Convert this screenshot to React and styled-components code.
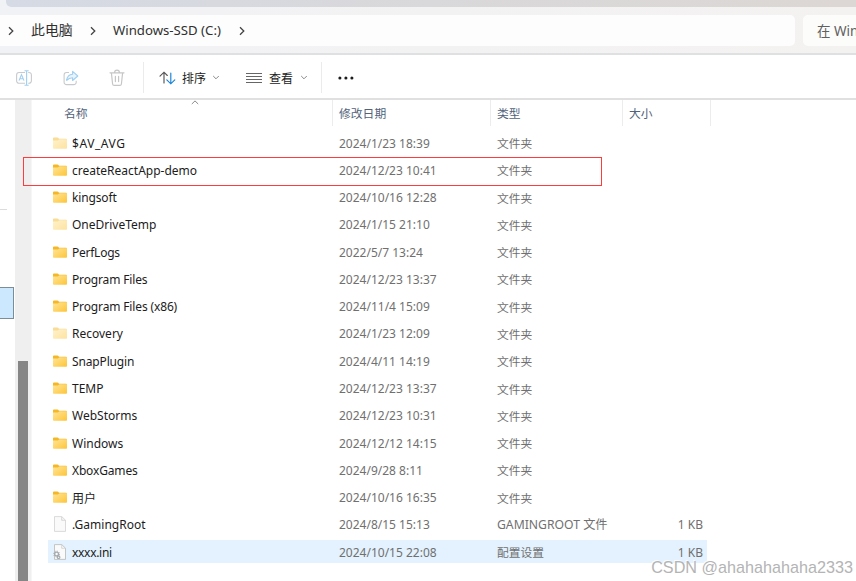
import React from "react";
import styled, { createGlobalStyle } from "styled-components";

const files = [
  { name: "$AV_AVG", date: "2024/1/23 18:39", type: "文件夹", icon: "folder", faded: true, spacing: 0.55 },
  { name: "createReactApp-demo", date: "2024/12/23 10:41", type: "文件夹", icon: "folder" },
  { name: "kingsoft", date: "2024/10/16 12:28", type: "文件夹", icon: "folder", spacing: -0.15 },
  { name: "OneDriveTemp", date: "2024/1/15 21:10", type: "文件夹", icon: "folder", faded: true },
  { name: "PerfLogs", date: "2022/5/7 13:24", type: "文件夹", icon: "folder", spacing: -0.25 },
  { name: "Program Files", date: "2024/12/23 13:37", type: "文件夹", icon: "folder", spacing: -0.15 },
  { name: "Program Files (x86)", date: "2024/11/4 15:09", type: "文件夹", icon: "folder", spacing: -0.14 },
  { name: "Recovery", date: "2024/1/23 12:09", type: "文件夹", icon: "folder", faded: true },
  { name: "SnapPlugin", date: "2024/4/11 14:19", type: "文件夹", icon: "folder", spacing: -0.15 },
  { name: "TEMP", date: "2024/12/23 13:37", type: "文件夹", icon: "folder" },
  { name: "WebStorms", date: "2024/12/23 10:31", type: "文件夹", icon: "folder" },
  { name: "Windows", date: "2024/12/12 14:15", type: "文件夹", icon: "folder" },
  { name: "XboxGames", date: "2024/9/28 8:11", type: "文件夹", icon: "folder", spacing: -0.15 },
  { name: "用户", date: "2024/10/16 16:35", type: "文件夹", icon: "folder" },
  { name: ".GamingRoot", date: "2024/8/15 15:13", type: "GAMINGROOT 文件", icon: "file", size: "1 KB" },
  { name: "xxxx.ini", date: "2024/10/15 22:08", type: "配置设置", icon: "ini", size: "1 KB", selected: true, spacing: -0.3 },
];

function Chevron() {
  return (
    <svg width="6" height="10" viewBox="0 0 6 10" fill="none" stroke="#444" strokeWidth="1.3">
      <path d="M1 1.2 4.8 5 1 8.8" />
    </svg>
  );
}

function Caret({ up }) {
  return (
    <svg width="8" height="5" viewBox="0 0 8 5" fill="none" stroke="#8a8a8a" strokeWidth="1">
      <path d={up ? "M.8 4 4 .9 7.2 4" : "M1.2 1 4 3.8 6.8 1"} />
    </svg>
  );
}

function RenameIcon() {
  return (
    <svg width="16" height="16" viewBox="0 0 16 16" fill="none" strokeWidth="1.1">
      <path d="M9 2.5H3A2.4 2.4 0 0 0 .6 4.9v5.9A2.4 2.4 0 0 0 3 13.2h6M12.2 2.5h.8a2.4 2.4 0 0 1 2.4 2.4v5.9a2.4 2.4 0 0 1-2.4 2.4h-.8" stroke="#c8cacd" />
      <path d="M10.6 1v14M8.5.7h4.2M8.5 15.3h4.2M3 10.6l2.5-6 2.5 6M3.8 8.8h3.4" stroke="#a0cff2" />
    </svg>
  );
}

function ShareIcon() {
  return (
    <svg width="16" height="16" viewBox="0 0 16 16" fill="none" strokeWidth="1.1" strokeLinejoin="round">
      <path d="M6 2.5H3.5A2.4 2.4 0 0 0 1.1 4.9v7.3a2.4 2.4 0 0 0 2.4 2.4h7.3a2.4 2.4 0 0 0 2.4-2.4v-1.4" stroke="#c8cacd" />
      <path d="M9.6 1.4v2.8C6 4.4 4.1 6.6 3.7 10.4c1.5-1.8 3.3-2.7 5.9-2.7v2.8L14.8 6z" fill="#e9f4fc" stroke="#a0cff2" />
    </svg>
  );
}

function TrashIcon() {
  return (
    <svg width="16" height="18" viewBox="0 0 16 18" fill="none" stroke="#c6c6c6" strokeWidth="1.2" strokeLinecap="round">
      <path d="M1 3.8h14M5.6 3.5a2.4 2.4 0 0 1 4.8 0M2.4 4l1.2 11a1.6 1.6 0 0 0 1.6 1.4h5.6a1.6 1.6 0 0 0 1.6-1.4L13.6 4M6.4 7.4v5.2M9.6 7.4v5.2" />
    </svg>
  );
}

function SortIcon() {
  return (
    <svg width="17" height="14" viewBox="0 0 17 14" fill="none" strokeWidth="1.15" strokeLinecap="round">
      <path d="M5 12V1.2M1 5.2l4-4 3.3 3.3" stroke="#555" />
      <path d="M11.8 2v10.8M7.8 8.8l4 4 4-4" stroke="#1683d8" />
    </svg>
  );
}

function ViewIcon() {
  return (
    <svg width="16" height="12" viewBox="0 0 16 12" stroke="#666" strokeWidth="1">
      <path d="M0 1.5h16M0 4.5h16M0 7.5h16M0 10.5h16" />
    </svg>
  );
}

function MoreIcon() {
  return (
    <svg width="16" height="4" viewBox="0 0 16 4" fill="#1c1c1c">
      <circle cx="1.9" cy="2" r="1.55" />
      <circle cx="7.9" cy="2" r="1.55" />
      <circle cx="13.9" cy="2" r="1.55" />
    </svg>
  );
}

function FolderIcon({ faded }) {
  return (
    <svg width="14" height="12" viewBox="0 0 14 12" opacity={faded ? 0.48 : 1}>
      <defs>
        <linearGradient id="folderFront" x1="0" y1="0" x2="1" y2="1">
          <stop offset="0" stopColor="#ffe59a" />
          <stop offset="1" stopColor="#fdc536" />
        </linearGradient>
      </defs>
      <path d="M0 1.3Q0 .4.9.4h3.5q.5 0 .8.4l.8.9h7q1 0 1 1V6H0z" fill="#f5b824" />
      <path d="M0 3.6h4.5q.5 0 .8-.3l.8-.8q.3-.3.8-.3H14v8.8q0 .8-.8.8H.8q-.8 0-.8-.8z" fill="url(#folderFront)" />
    </svg>
  );
}

function FileIcon({ gear }) {
  return (
    <svg width="14" height="16" viewBox="0 0 14 16">
      <path d="M1.5.6h7.3l3.7 3.6v11.2h-11z" fill="#fafafa" stroke={gear ? "#b8b8b8" : "#d2d2d2"} strokeWidth=".8" />
      <path d="M8.7.8v3.5h3.6" fill="none" stroke="#c8c8c8" strokeWidth=".7" />
      {gear && (
        <g fill="none" stroke="#a3aab0">
          <circle cx="3.6" cy="10" r="1.9" strokeWidth="1.3" />
          <circle cx="3.6" cy="10" r="2.9" strokeWidth="1" strokeDasharray="1.1 1.15" />
          <circle cx="5.6" cy="13.2" r="1.3" strokeWidth="1.2" />
        </g>
      )}
    </svg>
  );
}

export default function App() {
  return (
    <Explorer>
      <GlobalStyle />
      <TitleStrip />
      <AddressRow>
        <Breadcrumb>
          <Chevron />
          <Crumb $width={42} $size={13.9}>此电脑</Crumb>
          <Chevron />
          <Crumb $width={109} $size={13.2}>Windows-SSD (C:)</Crumb>
          <Chevron />
        </Breadcrumb>
        <Search>在 Win</Search>
      </AddressRow>

      <Toolbar>
        <ToolGroup>
          <RenameIcon />
          <ShareIcon />
          <TrashIcon />
        </ToolGroup>
        <MenuGroup>
          <MenuButton $gap={6}>
            <SortIcon />
            <span>排序</span>
            <Caret />
          </MenuButton>
          <MenuButton $gap={7}>
            <ViewIcon />
            <span>查看</span>
            <Caret />
          </MenuButton>
        </MenuGroup>
        <More>
          <MoreIcon />
        </More>
      </Toolbar>

      <Content>
        <NavPane>
          <NavDivider />
          <NavSelected />
        </NavPane>
        <ScrollTrack>
          <ScrollThumb />
        </ScrollTrack>
        <FileList>
          <HeaderRow>
            <HeaderCell>
              名称
              <SortMark>
                <Caret up />
              </SortMark>
            </HeaderCell>
            <HeaderCell>修改日期</HeaderCell>
            <HeaderCell>类型</HeaderCell>
            <HeaderCell>大小</HeaderCell>
          </HeaderRow>
          {files.map((file) => (
            <Row key={file.name} $selected={file.selected}>
              <Name $spacing={file.spacing}>
                <IconSlot>
                  {file.icon === "folder" ? (
                    <FolderIcon faded={file.faded} />
                  ) : (
                    <FileIcon gear={file.icon === "ini"} />
                  )}
                </IconSlot>
                {file.name}
              </Name>
              <Detail>{file.date}</Detail>
              <Type $wide={file.icon === "file"}>{file.type}</Type>
              <Size>{file.size}</Size>
            </Row>
          ))}
          <Highlight />
        </FileList>
      </Content>
      <Watermark>CSDN @ahahahahaha2333</Watermark>
    </Explorer>
  );
}

const GlobalStyle = createGlobalStyle`
  * {
    box-sizing: border-box;
  }
  body {
    margin: 0;
    overflow: hidden;
  }
`;

const Explorer = styled.div`
  position: relative;
  display: flex;
  flex-direction: column;
  width: 856px;
  height: 581px;
  overflow: hidden;
  background: #fff;
  font-family: "Noto Sans", "Noto Sans CJK SC", sans-serif;
  font-size: 12px;
  white-space: nowrap;
  svg {
    display: block;
    flex: none;
  }
`;

const TitleStrip = styled.div`
  flex: none;
  height: 7px;
  margin-left: 6px;
  border-bottom-left-radius: 5px;
  background: linear-gradient(90deg, #d5dae4, #d9d8da 50%, #dcd7d4);
  box-shadow: -6px 0 0 6px #f1f2f5;
`;

const AddressRow = styled.div`
  flex: none;
  display: flex;
  gap: 8px;
  height: 46px;
  padding: 8px 0 7px;
  background: linear-gradient(90deg, #f1f2f5, #f3f2f3 50%, #f4f2f1);
`;

const Breadcrumb = styled.div`
  display: flex;
  align-items: center;
  width: 795px;
  padding-left: 8px;
  border-radius: 0 5px 5px 0;
  background: #fcfdfc;
  color: #303030;
`;

const Crumb = styled.span`
  width: ${(props) => props.$width}px;
  margin: -2px 17px 0;
  font-size: ${(props) => props.$size}px;
  line-height: 18px;
`;

const Search = styled.div`
  flex: 1;
  overflow: hidden;
  padding-left: 14px;
  border-radius: 5px 0 0 5px;
  background: #fcfcfb;
  color: #606060;
  font-size: 13.5px;
  line-height: 32px;
`;

const Toolbar = styled.div`
  flex: none;
  display: flex;
  align-items: center;
  height: 47px;
  padding-top: 2px;
  border-top: 2px solid #dfe0e2;
  border-bottom: 2px solid #e0e0e1;
`;

const ToolGroup = styled.div`
  display: flex;
  align-items: center;
  justify-content: space-between;
  width: 144px;
  height: 31px;
  padding: 0 18px 0 16px;
  border-right: 1px solid #ebebeb;
`;

const MenuGroup = styled.div`
  display: flex;
  align-items: center;
  gap: 26px;
  width: 178px;
  height: 31px;
  padding-left: 15px;
  border-right: 1px solid #ebebeb;
`;

const MenuButton = styled.div`
  display: flex;
  align-items: center;
  gap: ${(props) => props.$gap}px;
  color: #222;
  span {
    width: 24px;
  }
`;

const More = styled.div`
  padding-left: 16px;
`;

const Content = styled.div`
  flex: 1;
  display: flex;
`;

const NavPane = styled.div`
  width: 15px;
  padding-top: 109px;
`;

const NavDivider = styled.div`
  width: 7px;
  height: 1px;
  margin-bottom: 77px;
  background: #dcdcdc;
`;

const NavSelected = styled.div`
  width: 14px;
  height: 32px;
  border: 1px solid #7d8c99;
  border-left: 0;
  background: #cce8ff;
`;

const ScrollTrack = styled.div`
  width: 16px;
  padding: 261px 3.5px 0 3px;
  background: #efefef;
`;

const ScrollThumb = styled.div`
  height: 220px;
  background: #868686;
`;

const FileList = styled.div`
  position: relative;
  flex: 1;
  padding-left: 16px;
  border-left: 1px solid #f6f6f6;
`;

const HeaderRow = styled.div`
  display: grid;
  grid-template-columns: 285px 158px 132px 88px;
  height: 26px;
  margin-bottom: 5px;
  color: #51627a;
  font-size: 11.8px;
  line-height: 26px;
`;

const HeaderCell = styled.div`
  position: relative;
  padding-left: 6px;
  border-right: 1px solid #ececec;
  &:first-child {
    padding-left: 16px;
  }
`;

const SortMark = styled.div`
  position: absolute;
  top: 0;
  left: 143px;
`;

const Row = styled.div`
  display: grid;
  grid-template-columns: 291px 158px 112px 94px;
  align-items: center;
  width: 659px;
  height: 23.28px;
  margin-bottom: 4px;
  background: ${(props) => (props.$selected ? "#e3f2fe" : "transparent")};
`;

const Name = styled.div`
  display: flex;
  align-items: center;
  padding-top: 1px;
  color: #1c1c1c;
  letter-spacing: ${(props) => props.$spacing || 0}px;
`;

const IconSlot = styled.span`
  display: flex;
  width: 19px;
  margin: -1px 0 0 5px;
`;

const Detail = styled.div`
  padding-top: 1px;
  color: #707070;
`;

const Type = styled(Detail)`
  padding-top: 0;
  font-size: ${(props) => (props.$wide ? 12.2 : 11.75)}px;
`;

const Size = styled(Detail)`
  text-align: right;
`;

const Highlight = styled.div`
  position: absolute;
  top: 57px;
  left: -9px;
  width: 579px;
  height: 29px;
  border: 1px solid #ff3b3b;
`;

const Watermark = styled.div`
  position: absolute;
  right: 3px;
  bottom: 4px;
  color: #b4b4b4;
  font-family: "Liberation Sans", sans-serif;
  font-size: 16.2px;
  line-height: 20px;
  text-shadow: -1px -1px 0 rgba(255, 255, 255, 0.8);
`;
